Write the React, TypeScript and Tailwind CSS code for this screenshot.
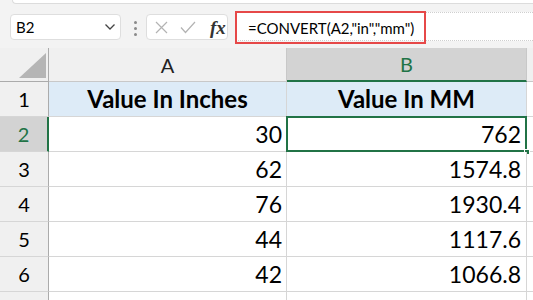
import React from 'react';

const rows: [string, string][] = [
  ['30', '762'],
  ['62', '1574.8'],
  ['76', '1930.4'],
  ['44', '1117.6'],
  ['42', '1066.8'],
];

const grid = 'border-r border-b border-[#d6d6d6]';

export default function App() {
  return (
    <div className="w-[533px] h-[300px] overflow-hidden bg-[#f3f3f3] font-['Lato',sans-serif] text-black">
      {/* ribbon bottom edge */}
      <div className="ml-[12px] h-[4px] bg-white border-b border-l border-[#dcdcdc] rounded-bl-[4px]" />

      {/* formula bar */}
      <div className="flex items-start h-[44px]">
        <div className="ml-[10px] mt-[10px] w-[111px] h-[26px] bg-white border border-[#dedede] rounded-[4px] flex items-center pl-[5px] pr-[4px]">
          <span className="text-[15px] leading-none">B2</span>
          <svg className="ml-auto" width="12" height="8" viewBox="0 0 12 8">
            <path d="M1.5 1.5 L6 6 L10.5 1.5" fill="none" stroke="#444" strokeWidth="1.3" />
          </svg>
        </div>
        <div className="ml-[13px] mt-[17px] flex flex-col gap-[3px]">
          <div className="w-[3px] h-[3px] rounded-full bg-[#8a8a8a]" />
          <div className="w-[3px] h-[3px] rounded-full bg-[#8a8a8a]" />
          <div className="w-[3px] h-[3px] rounded-full bg-[#8a8a8a]" />
        </div>
        <div className="ml-[9px] mt-[10px] w-[82px] h-[26px] bg-white border border-[#dedede] rounded-[4px] flex items-center pl-[8px]">
          <svg width="13" height="13" viewBox="0 0 13 13">
            <path d="M1 1 L12 12 M12 1 L1 12" stroke="#b3b3b3" strokeWidth="1.2" />
          </svg>
          <svg className="ml-[12px]" width="16" height="13" viewBox="0 0 16 13">
            <path d="M1 6.5 L5.5 11.5 L15 1" fill="none" stroke="#b3b3b3" strokeWidth="1.2" />
          </svg>
          <span className="ml-[14px] font-['Liberation_Serif',serif] italic text-[19px] leading-none font-semibold text-[#333]">fx</span>
        </div>
        <div className="relative ml-[8px] mt-[8px] flex-1 h-[29px] bg-white border-y border-dotted border-[#cfcfcf] flex items-center pl-[12px] pt-[3px]">
          <span className="text-[15px] leading-none">=CONVERT(A2,"in","mm")</span>
          <div className="absolute left-[-1px] top-[-2px] w-[191px] h-[33px] border-2 border-[#e64848]" />
        </div>
      </div>

      {/* sheet */}
      <div className="grid grid-cols-[49px_238px_240px_1fr] grid-rows-[34px_repeat(7,35px)]">
        <div className="bg-[#f0f0f0] border-r border-b border-[#ababab] relative">
          <svg className="absolute left-0 top-0" width="48" height="33" viewBox="0 0 48 33">
            <path d="M19 30 L46 5 L46 30 Z" fill="#b5b5b5" />
          </svg>
        </div>
        <div className="bg-[#f0f0f0] border-r border-b border-[#c8c8c8] flex items-center justify-center text-[20px] text-[#222]">A</div>
        <div className="bg-[#d3d3d3] border-r border-[#c8c8c8] border-b-2 border-b-[#217346] flex items-center justify-center text-[20px] text-[#217346]">B</div>
        <div className="bg-[#f0f0f0] border-b border-[#c8c8c8]" />

        {/* row 1 */}
        <div className="bg-[#f0f0f0] border-r border-b border-r-[#ababab] border-b-[#d6d6d6] flex items-center justify-center text-[20px]">1</div>
        <div className={`bg-[#ddebf7] ${grid} flex items-center justify-center font-bold text-[24px]`}>Value In Inches</div>
        <div className={`bg-[#ddebf7] ${grid} flex items-center justify-center font-bold text-[24px]`}>Value In MM</div>
        <div className="bg-white border-b border-[#d6d6d6]" />

        {rows.map(([a, b], i) => {
          const selected = i === 0;
          return (
            <React.Fragment key={i}>
              <div
                className={
                  selected
                    ? 'bg-[#d3d3d3] border-r-2 border-r-[#217346] border-b border-b-[#d6d6d6] flex items-center justify-center text-[20px] text-[#217346]'
                    : 'bg-[#f0f0f0] border-r border-b border-r-[#ababab] border-b-[#d6d6d6] flex items-center justify-center text-[20px]'
                }
              >
                {i + 2}
              </div>
              <div className={`bg-white ${grid} flex items-center justify-end pr-[4px] text-[23px]`}>{a}</div>
              <div className={`relative bg-white ${grid} flex items-center justify-end pr-[5px] text-[23px]`}>
                {b}
                {selected && (
                  <>
                    <div className="absolute left-[-1px] top-[-1px] right-[-1px] bottom-[-1px] border-2 border-[#217346]" />
                    <div className="absolute right-[-4px] bottom-[-4px] w-[6px] h-[6px] bg-[#217346] border border-white" />
                  </>
                )}
              </div>
              <div className="bg-white border-b border-[#d6d6d6]" />
            </React.Fragment>
          );
        })}

        {/* row 7 (cut off) */}
        <div className="bg-[#f0f0f0] border-r border-[#ababab]" />
        <div className="bg-white border-r border-[#d6d6d6]" />
        <div className="bg-white border-r border-[#d6d6d6]" />
        <div className="bg-white" />
      </div>
    </div>
  );
}
